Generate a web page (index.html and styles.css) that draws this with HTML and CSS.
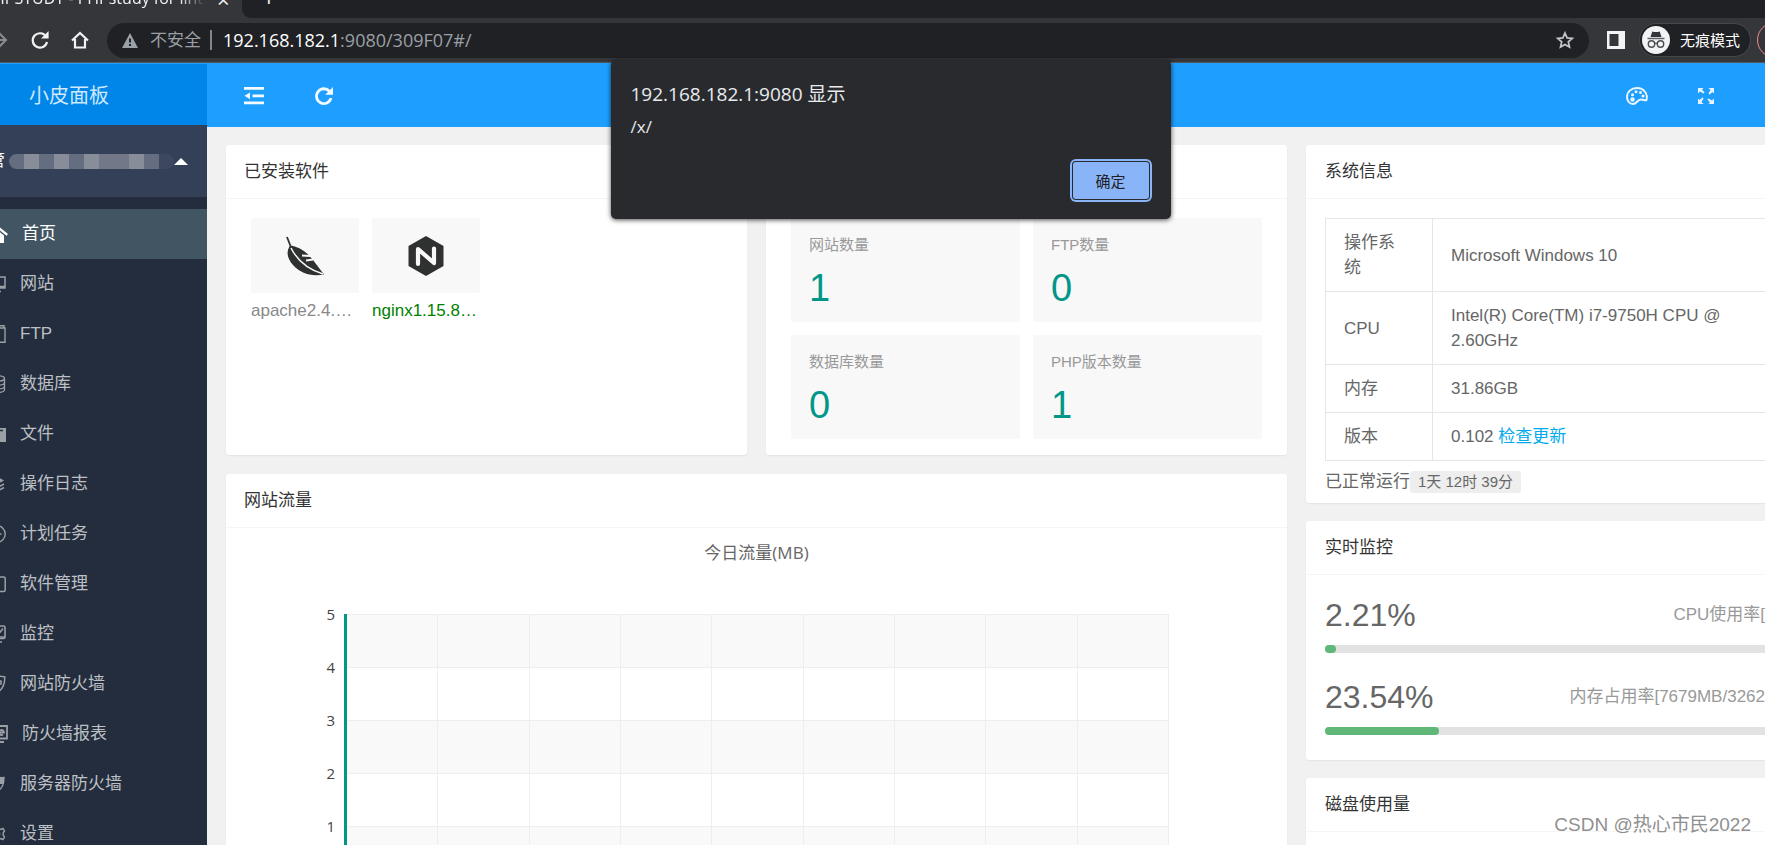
FILE: index.html
```html
<!DOCTYPE html>
<html lang="zh-CN">
<head>
<meta charset="utf-8">
<title>小皮面板</title>
<link rel="stylesheet" href="styles.css">
</head>
<body>
<div class="window">
  <header class="browser">
    <div class="tabstrip">
      <div class="tab"><span class="tab-title">HPSTUDY - PHPstudy for linux</span><span class="tab-close">×</span></div>
      <div class="newtab"><span class="tab-plus">+</span></div>
    </div>
    <div class="toolbar">
      <button class="tool tool-forward" aria-label="前进"><svg width="18" height="18" viewBox="0 0 18 18" fill="none" stroke="#8b8c8f" stroke-width="2"><path d="M1 9h15M9 2l7 7-7 7"/></svg></button>
      <button class="tool tool-reload" aria-label="重新加载"><svg width="18" height="18" viewBox="0 0 18 18"><path d="M15 5.5A7.2 7.2 0 1 0 16 11" fill="none" stroke="#f1f3f4" stroke-width="2.2"/><path d="M17.600 0v7.500H10z" fill="#f1f3f4"/></svg></button>
      <button class="tool tool-home" aria-label="主页"><svg width="18" height="18" viewBox="0 0 18 18" fill="none" stroke="#f1f3f4" stroke-width="2.200"><path d="M1 9.500 9 2l8 7.500M4 8v8.500h10V8"/></svg></button>
      <div class="address">
        <svg width="16" height="15" viewBox="0 0 16 15"><path d="M8 0l8 15H0z" fill="#9aa0a6"/><path d="M7 5.500h2v4H7zM7 11h2v2H7z" fill="#202124"/></svg>
        <span class="insecure">不安全</span>
        <span class="divider"></span>
        <span class="url"><span class="host">192.168.182.1</span>:9080/309F07#/</span>
        <svg class="star" width="18" height="18" viewBox="0 0 18 18" fill="none" stroke="#c4c7ca" stroke-width="1.700"><path d="M9 2l2.100 4.900 5.200.5-4 3.500 1.200 5.200L9 13.400l-4.500 2.700 1.200-5.200-4-3.500 5.200-.5z"/></svg>
      </div>
      <button class="tool tool-panel" aria-label="侧边栏"><svg width="18" height="18" viewBox="0 0 18 18"><path d="M0 0h18v18H0z" fill="#f1f3f4"/><path d="M2.500 3h9v12h-9z" fill="#35363a"/></svg></button>
      <button class="incognito">
        <svg width="28" height="28" viewBox="0 0 28 28"><circle cx="14" cy="14" r="14" fill="#f1f3f4"/><path d="M10.300 5.500q3.700 1.200 7.400 0L19.500 11h-11z" fill="#35363a"/><path d="M5.500 12.500h17" stroke="#5f6368" stroke-width="1.500"/><g fill="none" stroke="#4b4d51" stroke-width="1.400"><circle cx="9.500" cy="18" r="3.200"/><circle cx="18.500" cy="18" r="3.200"/><path d="M12.700 17.500q1.300-.8 2.600 0"/></g></svg>
        <span>无痕模式</span>
      </button>
      <span class="update-ring"></span>
    </div>
  </header>

  <div class="app">
    <aside class="sidebar">
      <div class="logo">小皮面板</div>
      <div class="user">
        <span class="user-prefix">管</span>
        <span class="mosaic"><i class="m2"></i><i class="m1"></i><i class="m2"></i><i class="m1"></i><i class="m2"></i><i class="m1"></i><i class="m3"></i><i class="m3"></i><i class="m1"></i><i class="m2"></i><i class="m4"></i></span>
        <span class="caret"></span>
      </div>
      <nav class="menu">
        <a class="item wide active" href="#/"><svg width="20" height="20" viewBox="0 0 20 20" fill="#fff"><path d="M9 1l11 9-1.500 1.800L9 4-.5 11.800-2 10zM9 5.800l7 5.700V19h-5v-5H7v5H2v-7.500z"/></svg>首页</a>
        <a class="item" href="#/site"><svg width="18" height="18" viewBox="0 0 18 18" fill="none" stroke="#9b9fa6" stroke-width="1.500"><path d="M1 2h16v11H1zM1 11.500h16M6 16.500h7"/></svg>网站</a>
        <a class="item" href="#/ftp"><svg width="18" height="18" viewBox="0 0 18 18" fill="none" stroke="#9b9fa6" stroke-width="1.400"><path d="M1 3h16v14.300H1zM3 3V.8h13V3M9 8h3M9 11h3"/></svg>FTP</a>
        <a class="item" href="#/db"><svg width="18" height="18" viewBox="0 0 18 18" fill="none" stroke="#9b9fa6" stroke-width="1.300"><ellipse cx="9" cy="3.500" rx="7.500" ry="2.800"/><path d="M1.500 3.500v11c0 4 15 4 15 0v-11M1.500 7.200c0 4 15 4 15 0M1.500 11c0 4 15 4 15 0"/></svg>数据库</a>
        <a class="item" href="#/files"><svg width="18" height="18" viewBox="0 0 18 18"><path d="M0 2h8l2 1h8v14H0z" fill="#9b9fa6"/><path d="M9 5.500h6" stroke="#242d3d" stroke-width="1.500"/></svg>文件</a>
        <a class="item" href="#/logs"><svg width="18" height="18" viewBox="0 0 18 18"><path d="M8 1l8 4.500L8 10 0 5.500z" fill="#9b9fa6"/><path d="M0 9l8 4.300L16 9M0 12.500l8 4.300 8-4.300" fill="none" stroke="#9b9fa6" stroke-width="1.500"/></svg>操作日志</a>
        <a class="item" href="#/cron"><svg width="18" height="18" viewBox="0 0 18 18" fill="none" stroke="#9b9fa6" stroke-width="1.400"><circle cx="9" cy="9" r="8.200"/><path d="M9 4v5h4.500"/></svg>计划任务</a>
        <a class="item" href="#/soft"><svg width="18" height="18" viewBox="0 0 18 18" fill="none" stroke="#9b9fa6" stroke-width="1.500"><rect x="1" y="2" width="16.200" height="14.500" rx="1.500"/></svg>软件管理</a>
        <a class="item" href="#/monitor"><svg width="18" height="18" viewBox="0 0 18 18" fill="none" stroke="#9b9fa6" stroke-width="1.600"><rect x="1" y="1" width="16" height="12.500" rx="1.500"/><path d="M1 12h16M5 17h9M8 6l2.500 3L15 3.500"/></svg>监控</a>
        <a class="item" href="#/waf"><svg width="18" height="18" viewBox="0 0 18 18" fill="none" stroke="#9b9fa6" stroke-width="1.500"><path d="M9 .8l7.800 1c0 8-2 13-7.800 15.500C3.200 14.800 1.200 9.800 1.200 1.800zM10 6h3v3h-3"/></svg>网站防火墙</a>
        <a class="item wide" href="#/report"><svg width="20" height="20" viewBox="0 0 20 20" fill="none" stroke="#9b9fa6" stroke-width="1.800"><path d="M1 2h18v12.500H1zM6 18h10M11 8.500h5a2.500 2.500 0 1 0-1 2"/></svg>防火墙报表</a>
        <a class="item" href="#/server"><svg width="18" height="18" viewBox="0 0 18 18"><path d="M8 1q4 2 8 1.500c0 8-3 12.500-8 14.500C3 15 0 10.500 0 2.500Q4 3 8 1z" fill="none" stroke="#9b9fa6" stroke-width="1.300"/><path d="M8 1q4 2 8 1.500V9H8z" fill="#9b9fa6"/></svg>服务器防火墙</a>
        <a class="item" href="#/settings"><svg width="18" height="18" viewBox="0 0 18 18" fill="none" stroke="#9b9fa6" stroke-width="1.400"><circle cx="9" cy="9" r="2.600"/><path d="M7.500 1.500h3l.5 2 2 1 2-1 1.500 2.500-1.300 1.700v2.600l1.300 1.700-1.500 2.500-2-1-2 1-.5 2h-3l-.5-2-2-1-2 1L1.500 12l1.300-1.700V7.700L1.500 6 3 3.500l2 1 2-1z"/></svg>设置</a>
      </nav>
    </aside>

    <div class="page">
      <div class="topbar">
        <button class="tb" aria-label="收起菜单"><svg width="20" height="18" viewBox="0 0 20 18" fill="#f4faff"><path d="M0 0h20v2.700H0zM8.500 7.500H20v2.700H8.500zM0 14.600h20v2.700H0zM.5 8.800 6 5.500v6.700z"/></svg></button>
        <button class="tb" aria-label="刷新"><svg width="20" height="18" viewBox="0 0 20 18"><path d="M15.500 4.300A7.400 7.400 0 1 0 17 11.200" fill="none" stroke="#f4faff" stroke-width="2.800"/><path d="M19 0v7.800h-7.800z" fill="#f4faff"/></svg></button>
        <span class="spacer"></span>
        <button class="tb" aria-label="主题"><svg width="22" height="18" viewBox="0 0 22 18"><path d="M11 1C5 1 1 5 1 10c0 4 2.500 7 6 7 4 0 4-4.500 8-4.500 2.500 0 4.500 1.500 5.500.5C22 7 18 1 11 1z" fill="none" stroke="#eef7ff" stroke-width="1.900"/><g fill="#eef7ff"><circle cx="6.500" cy="12.500" r="2.200"/><circle cx="6.500" cy="7.800" r="1.500"/><circle cx="10" cy="4.800" r="1.500"/><circle cx="14.500" cy="5.500" r="1.500"/><circle cx="17" cy="9" r="1.500"/></g></svg></button>
        <button class="tb" aria-label="全屏"><svg width="16" height="16" viewBox="0 0 16 16" fill="#e6f4ff"><path d="M0 0h5.500L4 1.500l2.600 2.900-1.200 1.200L2 3.500 0 5.500zM16 0v5.500L14.500 4l-2.900 2.600-1.200-1.200L12.500 2l-2-2zM0 16v-5.500L1.500 12l2.900-2.600 1.200 1.200L3.500 14l2 2zM16 16h-5.500l1.500-1.500-2.600-2.900 1.200-1.200L14 12.500l2-2z"/></svg></button>
      </div>

      <main class="content">
        <div class="left">
          <div class="row">
            <section class="card software">
              <h2>已安装软件</h2>
              <div class="apps">
                <div class="soft"><div class="thumb"><svg width="40" height="40" viewBox="0 0 40 40"><path d="M2 1l3.500 9" stroke="#2f3030" stroke-width="1.800" fill="none"/><path d="M5 9.500C16 11 22 17 28 24l11 14.500C26 41 15 37 8 29 2 22 1 16 5 9.500z" fill="#2f3030"/><path d="M6 12c6 12 16 21 32 26" fill="none" stroke="#f8f8f8" stroke-width="1.500"/><path d="M17 19.500l8 .5M21 24.500l7-1" stroke="#f8f8f8" stroke-width="1.800" fill="none"/></svg></div><span class="name">apache2.4.…</span></div>
                <div class="soft on"><div class="thumb"><svg width="40" height="40" viewBox="0 0 40 40"><path d="M20 0l17.500 10v20L20 40 2.500 30V10z" fill="#2f3030"/><path d="M12 28V13l16 14V12.500" fill="none" stroke="#f8f8f8" stroke-width="4.200" stroke-linecap="round" stroke-linejoin="round"/></svg></div><span class="name">nginx1.15.8…</span></div>
              </div>
            </section>
            <section class="card">
              <h2></h2>
              <div class="stats">
                <div class="stat"><span class="stat-label">网站数量</span><span class="stat-num">1</span></div>
                <div class="stat"><span class="stat-label">FTP数量</span><span class="stat-num">0</span></div>
                <div class="stat"><span class="stat-label">数据库数量</span><span class="stat-num">0</span></div>
                <div class="stat"><span class="stat-label">PHP版本数量</span><span class="stat-num">1</span></div>
              </div>
            </section>
          </div>
          <section class="card traffic">
            <h2>网站流量</h2>
            <p class="chart-title">今日流量(MB)</p>
            <div class="chart">
              <div class="band"><span class="tick">5</span><i></i><i></i><i></i><i></i><i></i><i></i><i></i><i></i><i></i></div>
              <div class="band"><span class="tick">4</span><i></i><i></i><i></i><i></i><i></i><i></i><i></i><i></i><i></i></div>
              <div class="band"><span class="tick">3</span><i></i><i></i><i></i><i></i><i></i><i></i><i></i><i></i><i></i></div>
              <div class="band"><span class="tick">2</span><i></i><i></i><i></i><i></i><i></i><i></i><i></i><i></i><i></i></div>
              <div class="band"><span class="tick">1</span><i></i><i></i><i></i><i></i><i></i><i></i><i></i><i></i><i></i></div>
            </div>
          </section>
        </div>

        <div class="right">
          <section class="card side">
            <h2>系统信息</h2>
            <div class="info">
              <table>
                <tr><th scope="row">操作系统</th><td>Microsoft Windows 10</td></tr>
                <tr><th scope="row">CPU</th><td>Intel(R) Core(TM) i7-9750H CPU @ 2.60GHz</td></tr>
                <tr><th scope="row">内存</th><td>31.86GB</td></tr>
                <tr><th scope="row">版本</th><td>0.102 <a href="#/update">检查更新</a></td></tr>
              </table>
              <p class="uptime">已正常运行<span class="badge">1天 12时 39分</span></p>
            </div>
          </section>
          <section class="card side">
            <h2>实时监控</h2>
            <div class="meters">
              <div class="meter"><div class="meter-head"><b>2.21%</b><span>CPU使用率[</span></div><div class="bar"><div class="fill" style="width:2.21%"></div></div></div>
              <div class="meter"><div class="meter-head"><b>23.54%</b><span>内存占用率[7679MB/3262</span></div><div class="bar"><div class="fill" style="width:23.54%"></div></div></div>
            </div>
          </section>
          <section class="card side disk">
            <h2>磁盘使用量</h2>
          </section>
        </div>
      </main>
    </div>
  </div>

  <div class="dialog" role="alertdialog" aria-labelledby="dlg-title">
    <p class="dialog-title" id="dlg-title">192.168.182.1:9080 显示</p>
    <p class="dialog-text">/x/</p>
    <div class="dialog-actions"><button class="ok">确定</button></div>
  </div>
  <div class="watermark">CSDN @热心市民2022</div>
</div>
</body>
</html>
```

FILE: styles.css
```css
* { box-sizing: border-box; }
body {
  margin: 0;
  background: #f1f1f1;
  color: #666;
  font: 17px/24px "Liberation Sans", "Noto Sans CJK SC", sans-serif;
}
h2, p { margin: 0; font-weight: 400; }
button { border: 0; padding: 0; background: none; font: inherit; color: inherit; cursor: pointer; }
a { text-decoration: none; }
svg { display: block; flex: none; overflow: visible; }
.window {
  position: relative;
  height: 100vh;
  overflow: hidden;
  display: flex;
  flex-direction: column;
}

/* browser frame */
.browser {
  flex: none;
  background: #35363a;
  border-bottom: 1px solid #55585c;
  font-family: "Open Sans", "Noto Sans CJK SC", sans-serif;
}
.tabstrip { display: flex; height: 18px; color: #f1f3f4; overflow: hidden; }
.tab { width: 242px; flex: none; display: flex; align-items: flex-end; gap: 12px; }
.tab-title {
  width: 212px;
  margin-left: -7px;
  padding-bottom: 10px;
  white-space: nowrap;
  overflow: hidden;
  font-size: 16px;
  line-height: 20px;
  -webkit-mask-image: linear-gradient(90deg, #000 88%, transparent);
  mask-image: linear-gradient(90deg, #000 88%, transparent);
}
.tab-close { padding-bottom: 9px; font-size: 22px; line-height: 20px; }
.newtab {
  flex: 1;
  display: flex;
  align-items: flex-end;
  padding-left: 20px;
  background: #202124;
  border-bottom-left-radius: 9px;
}
.tab-plus { padding-bottom: 10px; font-size: 24px; line-height: 20px; }
.toolbar { height: 44px; display: flex; align-items: center; }
.tool { flex: none; }
.tool-forward { margin-left: -10px; }
.tool-reload { margin-left: 23px; }
.tool-home { margin-left: 22px; }
.address {
  flex: 1;
  height: 35px;
  margin-left: 18px;
  padding: 0 15px;
  border-radius: 18px;
  background: #202124;
  display: flex;
  align-items: center;
  color: #9aa0a6;
  white-space: nowrap;
}
.insecure { margin-left: 12px; }
.divider { width: 2px; height: 20px; margin: 0 11px 0 9px; background: #80868b; }
.url { font-size: 18px; }
.host { color: #fff; }
.star { margin-left: auto; }
.tool-panel { margin: 0 14px 0 18px; }
.incognito {
  height: 34px;
  padding: 0 10px 0 2px;
  border: 1px solid #46474b;
  border-radius: 17px;
  background: #202124;
  color: #fff;
  font-size: 15px;
  display: flex;
  align-items: center;
  gap: 10px;
  white-space: nowrap;
}
.update-ring {
  flex: none;
  width: 36px;
  height: 36px;
  margin: 0 -28px 0 6px;
  border: 1px solid #f28b82;
  border-radius: 18px;
}

/* sidebar */
.app { flex: 1; min-height: 0; display: flex; padding-top: 1px; background: #1e9fff; }
.sidebar {
  flex: none;
  width: 207px;
  background: #242d3d;
  overflow: hidden;
}
.logo {
  height: 61px;
  padding-left: 29px;
  background: #0085e8;
  color: #cfe8fc;
  font-size: 20px;
  line-height: 64px;
}
.user {
  height: 72px;
  display: flex;
  align-items: center;
  background: #344058;
  color: #fff;
}
.user-prefix { margin-left: -12px; }
.mosaic {
  display: flex;
  width: 165px;
  height: 15px;
  margin-left: 4px;
  border-radius: 8px;
  overflow: hidden;
}
.mosaic i { width: 15px; }
.m1 { background: #878d99; }
.m2 { background: #656d80; }
.m3 { background: #737888; }
.m4 { background: #3d4760; }
.caret { border: 7px solid transparent; border-bottom-color: #fff; border-top: 0; }
.menu { padding-top: 12px; }
.item {
  display: flex;
  align-items: center;
  gap: 14px;
  height: 50px;
  color: #bdc0c5;
  line-height: 26px;
  white-space: nowrap;
}
.item svg { margin-left: -12px; }
.active { background: #425563; color: #fff; }

/* top bar and cards */
.page { flex: 1; min-width: 0; background: #f1f1f1; }
.topbar {
  height: 63px;
  padding: 0 51px 0 37px;
  display: flex;
  align-items: center;
  gap: 50px;
  background: #1e9fff;
}
.spacer { flex: 1; }
.content { display: flex; gap: 19px; padding: 18px 0 0 19px; }
.left { flex: 1; min-width: 0; display: flex; flex-direction: column; gap: 19px; }
.right { flex: none; width: 26%; min-width: 459px; display: flex; flex-direction: column; gap: 18px; }
.row { display: grid; grid-template-columns: 1fr 1fr; gap: 19px; }
.card { background: #fff; border-radius: 3px; box-shadow: 0 1px 2px rgba(0, 0, 0, .06); }
.card h2 {
  height: 54px;
  padding-left: 18px;
  border-bottom: 1px solid #f5f5f5;
  color: #333;
  font-size: 17px;
  line-height: 54px;
}
.apps { display: flex; gap: 13px; padding: 19px 25px; }
.soft { width: 108px; color: #888; white-space: nowrap; }
.thumb {
  height: 75px;
  margin-bottom: 6px;
  display: flex;
  align-items: center;
  justify-content: center;
  background: #f8f8f8;
  border-radius: 2px;
}
.on { color: #008000; }
.stats { display: grid; grid-template-columns: 1fr 1fr; gap: 13px; padding: 19px 25px 16px; }
.stat {
  height: 104px;
  padding: 15px 18px;
  display: flex;
  flex-direction: column;
  background: #f8f8f8;
  border-radius: 2px;
}
.stat-label { color: #999; font-size: 15px; }
.stat-num { margin-top: 8px; color: #009688; font-size: 38px; line-height: 46px; }

/* chart */
.chart-title {
  padding: 13px 0 49px;
  text-align: center;
  font-family: "Open Sans", "Noto Sans CJK SC", sans-serif;
}
.chart { margin: 0 118px; border-left: 3px solid #009688; }
.band {
  position: relative;
  height: 53px;
  display: flex;
  border-top: 1px solid #eee;
}
.band:nth-child(odd) { background: #f9f9f9; }
.band i { flex: 1; border-right: 1px solid #eee; }
.tick {
  position: absolute;
  right: 100%;
  top: -11px;
  margin-right: 12px;
  color: #444;
  font: 15px/20px "Open Sans", sans-serif;
}

/* right column */
.side { overflow: hidden; border-radius: 3px 0 0 3px; }
.side h2 { padding-left: 19px; }
.info { padding: 19px 0 9px 19px; }
.info table { width: calc(100% + 44px); border-collapse: collapse; table-layout: fixed; line-height: 25px; }
.info th, .info td { padding: 11px 18px; border: 1px solid #e6e6e6; text-align: left; font-weight: 400; }
.info th { width: 107px; padding-right: 22px; }
.info td { padding-right: 62px; }
.info a { color: #01aaed; }
.uptime { padding-top: 9px; }
.badge { display: inline-block; padding: 0 8px; border-radius: 3px; background: #eee; font-size: 15px; line-height: 22px; }
.meters { padding: 22px 0 25px 19px; display: flex; flex-direction: column; gap: 26px; }
.meter-head { display: flex; justify-content: space-between; align-items: center; height: 36px; }
.meter-head b { font-size: 32px; font-weight: 400; line-height: 36px; }
.meter-head span { color: #999; white-space: nowrap; }
.bar { height: 8px; margin: 12px -44px 0 0; border-radius: 4px; background: #e2e2e2; }
.fill { height: 100%; border-radius: 4px; background: #5fb878; }
.disk { min-height: 120px; }

/* overlays */
.dialog {
  position: absolute;
  top: 60px;
  left: calc(50% - 272px);
  width: 560px;
  padding: 20px 19px 18px 20px;
  background: #292a2d;
  border-radius: 5px;
  box-shadow: 0 1px 5px rgba(0, 0, 0, .7);
  color: #e8eaed;
  font-family: "Open Sans", "Noto Sans CJK SC", sans-serif;
}
.dialog-title { font-size: 19px; line-height: 28px; }
.dialog-text { padding-top: 7px; font-size: 17px; }
.dialog-actions { display: flex; justify-content: flex-end; padding-top: 21px; }
.ok {
  width: 76px;
  height: 37px;
  margin: 2px 3px;
  border-radius: 3px;
  background: #8ab4f8;
  box-shadow: 0 0 0 1px #292a2d, 0 0 0 3px #8ab4f8;
  color: #202124;
  font-size: 15px;
}
.watermark {
  position: absolute;
  right: 14px;
  bottom: 7px;
  color: #909090;
  font-size: 19px;
  line-height: 26px;
}
```
